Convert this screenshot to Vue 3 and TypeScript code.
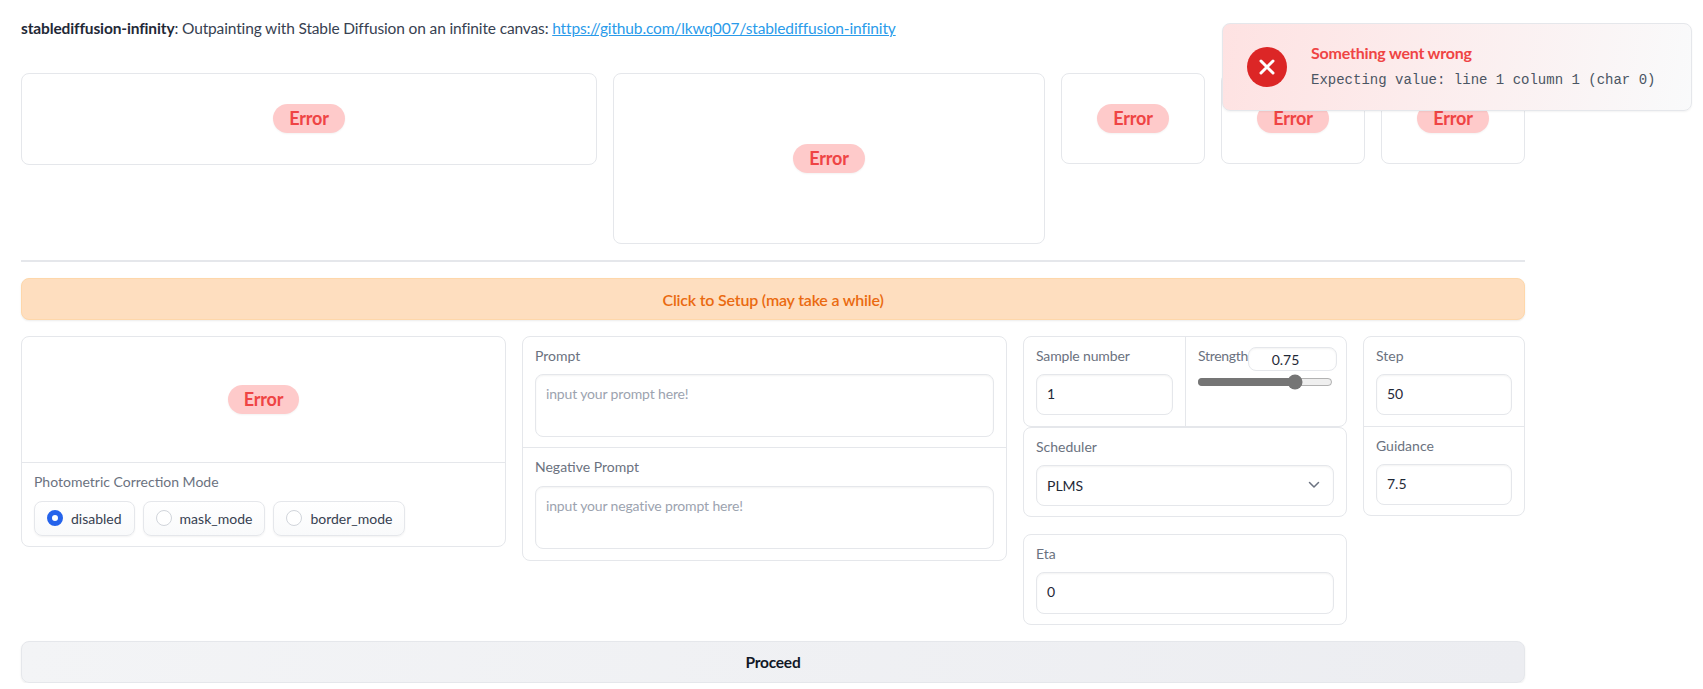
<script setup lang="ts">
const topCards: string[] = ['c1', 'c2', 'c3', 'c3', 'c3']
const modes = [
  { name: 'disabled', on: true },
  { name: 'mask_mode', on: false },
  { name: 'border_mode', on: false },
]
</script>

<template>
  <div class="page">
    <p class="intro"><strong>stablediffusion-infinity</strong>: Outpainting with Stable Diffusion on an infinite canvas: <a href="#">https://github.com/lkwq007/stablediffusion-infinity</a></p>

    <div class="row-top">
      <div v-for="(c, i) in topCards" :key="i" class="panel center" :class="c"><span class="err">Error</span></div>
    </div>

    <div class="rule"></div>

    <button class="btn setup" type="button">Click to Setup (may take a while)</button>

    <div class="row-main">
      <div class="panel">
        <div class="center err-area"><span class="err">Error</span></div>
        <div class="split"></div>
        <div class="field radios-field">
          <div class="label gap9">Photometric Correction Mode</div>
          <div class="radios">
            <label v-for="m in modes" :key="m.name" class="radio">
              <input type="radio" name="mode" :checked="m.on" />
              <span>{{ m.name }}</span>
            </label>
          </div>
        </div>
      </div>

      <div class="panel">
        <div class="field">
          <div class="label">Prompt</div>
          <textarea class="box area" placeholder="input your prompt here!"></textarea>
        </div>
        <div class="split"></div>
        <div class="field">
          <div class="label gap9">Negative Prompt</div>
          <textarea class="box area" placeholder="input your negative prompt here!"></textarea>
        </div>
      </div>

      <div class="stack">
        <div class="panel duo">
          <div class="field">
            <div class="label sample">Sample number</div>
            <input class="box" value="1" />
          </div>
          <div class="field strength">
            <div class="strength-head">
              <span class="label">Strength</span>
              <input class="mini" value="0.75" />
            </div>
            <input class="range" type="range" min="0" max="1" step="0.01" value="0.75" />
          </div>
        </div>
        <div class="panel">
          <div class="field">
            <div class="label">Scheduler</div>
            <div class="box select">
              <span>PLMS</span>
              <svg width="12" height="8" viewBox="0 0 12 8" fill="none"><path d="M1.5 1.5 6 6l4.500-4.500" stroke="#6b7280" stroke-width="1.500" stroke-linecap="round" stroke-linejoin="round"/></svg>
            </div>
          </div>
        </div>
        <div class="panel apart">
          <div class="field">
            <div class="label">Eta</div>
            <input class="box" value="0" />
          </div>
        </div>
      </div>

      <div class="panel">
        <div class="field">
          <div class="label">Step</div>
          <input class="box" value="50" />
        </div>
        <div class="split"></div>
        <div class="field">
          <div class="label">Guidance</div>
          <input class="box" value="7.5" />
        </div>
      </div>
    </div>

    <button class="btn proceed" type="button">Proceed</button>

    <div class="toast">
      <div class="toast-icon">
        <svg width="20" height="20" viewBox="0 0 20 20" fill="none"><path d="M4 4l12 12M16 4 4 16" stroke="#fff" stroke-width="3" stroke-linecap="round"/></svg>
      </div>
      <div class="toast-text">
        <div class="toast-title">Something went wrong</div>
        <div class="toast-msg">Expecting value: line 1 column 1 (char 0)</div>
      </div>
    </div>
  </div>
</template>

<style>
html, body { margin: 0; background: #fff; }
</style>

<style scoped>
.page {
  position: relative;
  box-sizing: border-box;
  width: 1546px;
  padding: 0 21px;
  font-family: Lato, "Noto Sans", sans-serif;
  font-size: 14px;
  color: #374151;
}
.intro { margin: 0; padding-top: 18px; font-size: 15.5px; letter-spacing: -0.14px; line-height: 20px; color: #374151; }
.intro strong { font-weight: 700; color: #1f2937; }
.intro a { color: #2a9bea; text-decoration: underline; }
.row-top {
  display: grid;
  grid-template-columns: 4fr 3fr 1fr 1fr 1fr;
  gap: 16px;
  align-items: start;
  margin-top: 35px;
}
.panel {
  box-sizing: border-box;
  border: 1px solid #e5e7eb;
  border-radius: 8px;
  background: #fff;
}
.center { display: flex; align-items: center; justify-content: center; }
.c1 { height: 92px; padding-bottom: 1px; }
.c2 { height: 171px; }
.c3 { height: 91px; }
.err {
  padding: 2px 16px;
  border-radius: 15px;
  background: #fecaca;
  color: #ef4444;
  font-size: 18px;
  letter-spacing: -0.2px;
  line-height: 25px;
  font-weight: 700;
  box-shadow: 0 1px 2px rgba(0, 0, 0, 0.05);
}
.rule { height: 2px; margin: 16px 0; background: #e5e7eb; }
.btn {
  display: block;
  box-sizing: border-box;
  width: 100%;
  height: 42px;
  border: 1px solid #e5e7eb;
  border-radius: 8px;
  font-family: inherit;
  font-size: 16px;
  font-weight: 600;
  box-shadow: 0 1px 2px rgba(0, 0, 0, 0.08);
}
.setup { background: #fedebf; border-color: #fed7aa; color: #ea6a10; letter-spacing: -0.2px; }
.proceed {
  margin-top: 16px;
  background: linear-gradient(100deg, #f3f4f6, #ecedf1);
  color: #111827;
  font-size: 15.5px;
  font-weight: 700;
  letter-spacing: -0.25px;
}
.row-main {
  display: grid;
  grid-template-columns: 485px 485px 324px 1fr;
  gap: 16px;
  align-items: start;
  margin-top: 16px;
}
.err-area { height: 125px; }
.split { height: 1px; background: #e5e7eb; }
.field { padding: 9px 12px 10.33px; }
.label { line-height: 20px; margin-bottom: 8px; color: #6b7280; }
.sample { letter-spacing: -0.15px; }
.gap9 { margin-bottom: 9px; }
.box {
  display: block;
  box-sizing: border-box;
  width: 100%;
  height: 41.33px;
  padding: 0 10px 2px;
  border: 1px solid #e5e7eb;
  border-radius: 8px;
  background: #fff;
  box-shadow: inset 0 1px 2px rgba(0, 0, 0, 0.05);
  font-family: inherit;
  font-size: 14px;
  color: #1f2937;
  outline: none;
}
.area { height: 63px; padding: 9px 10px; line-height: 20px; resize: none; }
.area::placeholder { color: #9ca3af; letter-spacing: -0.15px; }
.radios { display: flex; gap: 8px; }
.radio {
  display: flex;
  align-items: center;
  gap: 8px;
  box-sizing: border-box;
  height: 34.500px;
  padding: 0 12px;
  border: 1px solid #e5e7eb;
  border-radius: 8px;
  background: linear-gradient(to bottom, #fff, #f9fafb);
  box-shadow: 0 1px 2px rgba(0, 0, 0, 0.05);
  color: #374151;
}
.radio input {
  appearance: none;
  box-sizing: border-box;
  width: 16px;
  height: 16px;
  margin: 0;
  border: 1px solid #d1d5db;
  border-radius: 50%;
  background: #fff;
}
.radio input:checked { border: 5px solid #2563eb; }
.stack { display: flex; flex-direction: column; }
.duo { display: grid; grid-template-columns: 161px 161px; }
.strength { border-left: 1px solid #e5e7eb; padding-top: 10px; }
.strength-head { display: flex; }
.strength-head .label { flex: none; width: 50px; margin: 0; line-height: 18px; letter-spacing: -0.3px; white-space: nowrap; }
.mini {
  box-sizing: border-box;
  flex: none;
  width: 89px;
  height: 24px;
  padding: 0 14px 0 0;
  border: 1px solid #e5e7eb;
  border-radius: 8px;
  box-shadow: inset 0 1px 2px rgba(0, 0, 0, 0.05);
  text-align: center;
  font-family: inherit;
  font-size: 14px;
  color: #1f2937;
  outline: none;
}
.range { display: block; width: 136px; margin: 3px 0 0 -1px; accent-color: #757575; }
.apart { margin-top: 17px; }
.select { display: flex; align-items: center; justify-content: space-between; padding: 0 13px 0 10px; }
.toast {
  position: absolute;
  top: 23px;
  left: 1222px;
  box-sizing: border-box;
  display: flex;
  align-items: center;
  width: 470px;
  height: 88px;
  padding: 0 24px;
  border: 1px solid #e5e7eb;
  border-radius: 8px;
  background: linear-gradient(100deg, #fee2e2, #f9fafb);
  box-shadow: 0 1px 2px rgba(0, 0, 0, 0.05);
}
.toast-icon {
  display: flex;
  align-items: center;
  justify-content: center;
  flex: none;
  width: 40px;
  height: 40px;
  border-radius: 50%;
  background: #dc2626;
}
.toast-text { margin-left: 24px; padding-bottom: 2px; }
.toast-title { font-size: 16px; letter-spacing: -0.2px; line-height: 20px; font-weight: 700; color: #ef4444; }
.toast-msg { margin-top: 7px; font-family: "Liberation Mono", monospace; font-size: 14px; line-height: 20px; color: #4b5563; }
</style>
